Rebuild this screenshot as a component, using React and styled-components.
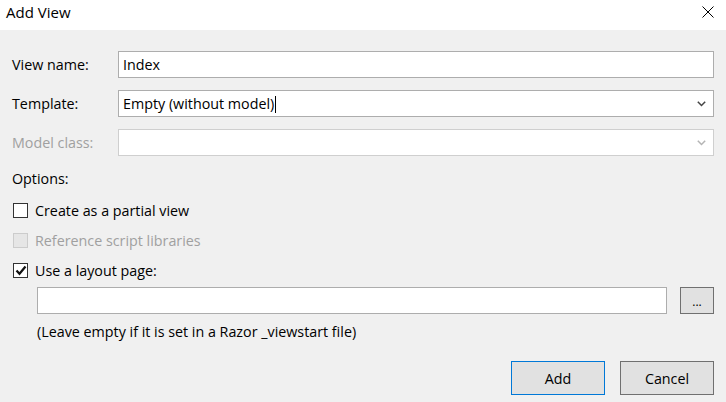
import React from "react";
import styled, { createGlobalStyle } from "styled-components";

const Global = createGlobalStyle`
  html, body { margin: 0; padding: 0; background: #f0f0f0; }
  body { font-family: "Open Sans", "Noto Sans", sans-serif; }
`;

const Dialog = styled.div`
  width: 726px;
  height: 402px;
  background: #f0f0f0;
  display: flex;
  flex-direction: column;
  font-family: "Open Sans", "Noto Sans", sans-serif;
  font-size: 14.3px;
  color: #000;
  overflow: hidden;
`;

const TitleBar = styled.div`
  height: 30px;
  background: #fff;
  display: flex;
  align-items: center;
  justify-content: space-between;
  padding: 0 12px 0 6px;
  box-sizing: border-box;
`;

const Title = styled.div`
  font-size: 15px;
  margin-top: -6px;
`;

const CloseBtn = styled.div`
  width: 12px;
  height: 12px;
  margin-top: -7px;
  display: flex;
`;

const Body = styled.div`
  flex: 1;
  display: flex;
  flex-direction: column;
  padding: 21px 12px 0 12px;
`;

const FieldRow = styled.div`
  display: grid;
  grid-template-columns: 106px 1fr;
  align-items: center;
  margin-bottom: ${(p) => p.$mb || 0}px;
`;

const Label = styled.div`
  color: ${(p) => (p.$disabled ? "#a0a0a0" : "#000")};
  line-height: 20px;
`;

const Input = styled.div`
  height: 27px;
  box-sizing: border-box;
  background: #fff;
  border: 1px solid ${(p) => (p.$disabled ? "#cfcfcf" : "#adadad")};
  display: flex;
  align-items: center;
  padding: 0 7px 0 4px;
  position: relative;
`;

const InputText = styled.span`
  flex: 1;
  line-height: 20px;
  white-space: nowrap;
`;

const Caret = styled.span`
  display: inline-block;
  width: 1px;
  height: 17px;
  background: #000;
  vertical-align: middle;
  margin-left: 1px;
`;

const Chevron = ({ color }) => (
  <svg width="9" height="6" viewBox="0 0 9 6">
    <path d="M0.8 0.8 L4.5 4.5 L8.2 0.8" fill="none" stroke={color} strokeWidth="1.5" />
  </svg>
);

const Section = styled.div`
  line-height: 20px;
  margin-top: ${(p) => p.$mt || 0}px;
`;

const CheckRow = styled.div`
  display: flex;
  align-items: center;
  height: 20px;
  margin-top: ${(p) => p.$mt || 0}px;
  gap: 7px;
  padding-left: 1px;
  color: ${(p) => (p.$disabled ? "#a0a0a0" : "#000")};
`;

const Box = styled.div`
  width: 15px;
  height: 15px;
  box-sizing: border-box;
  border: 1px solid ${(p) => (p.$disabled ? "#cccccc" : "#333")};
  background: ${(p) => (p.$disabled ? "#e6e6e6" : "#fff")};
  display: flex;
  align-items: center;
  justify-content: center;
`;

const Indented = styled.div`
  padding-left: 25px;
  display: flex;
  flex-direction: column;
`;

const PathRow = styled.div`
  display: flex;
  align-items: center;
  margin-top: 7px;
  gap: 13px;
`;

const PathInput = styled(Input)`
  flex: 1;
`;

const SmallButton = styled.div`
  width: 34px;
  height: 27px;
  box-sizing: border-box;
  border: 1px solid #707070;
  background: #e1e1e1;
  display: flex;
  align-items: center;
  justify-content: center;
  font-size: 12px;
  padding-top: 2px;
`;

const Hint = styled.div`
  line-height: 20px;
  margin-top: 8px;
`;

const Footer = styled.div`
  display: flex;
  justify-content: flex-end;
  gap: 15px;
  margin-top: 19px;
`;

const Button = styled.div`
  width: 94px;
  height: 34px;
  box-sizing: border-box;
  border: 1px solid ${(p) => (p.$primary ? "#0078d7" : "#707070")};
  background: #e1e1e1;
  display: flex;
  align-items: center;
  justify-content: center;
`;

export default function App() {
  return (
    <Dialog>
      <Global />
      <TitleBar>
        <Title>Add View</Title>
        <CloseBtn>
          <svg width="12" height="12" viewBox="0 0 12 12">
            <path d="M0.5 0.5 L11.5 11.5 M11.5 0.5 L0.5 11.5" stroke="#000" strokeWidth="1" />
          </svg>
        </CloseBtn>
      </TitleBar>
      <Body>
        <FieldRow $mb={12}>
          <Label>View name:</Label>
          <Input>
            <InputText>Index</InputText>
          </Input>
        </FieldRow>
        <FieldRow $mb={12}>
          <Label>Template:</Label>
          <Input>
            <InputText>
              Empty (without model)
              <Caret />
            </InputText>
            <Chevron color="#444" />
          </Input>
        </FieldRow>
        <FieldRow>
          <Label $disabled>Model class:</Label>
          <Input $disabled>
            <InputText />
            <Chevron color="#b4b4b4" />
          </Input>
        </FieldRow>
        <Section $mt={13}>Options:</Section>
        <CheckRow $mt={11}>
          <Box />
          <span>Create as a partial view</span>
        </CheckRow>
        <CheckRow $mt={10} $disabled>
          <Box $disabled />
          <span>Reference script libraries</span>
        </CheckRow>
        <CheckRow $mt={10}>
          <Box>
            <svg width="12" height="11" viewBox="0 0 12 11">
              <path d="M1.5 5.5 L4.5 8.8 L10.5 1.5" fill="none" stroke="#111" strokeWidth="2.2" />
            </svg>
          </Box>
          <span>Use a layout page:</span>
        </CheckRow>
        <Indented>
          <PathRow>
            <PathInput />
            <SmallButton>...</SmallButton>
          </PathRow>
          <Hint>(Leave empty if it is set in a Razor _viewstart file)</Hint>
        </Indented>
        <Footer>
          <Button $primary>Add</Button>
          <Button>Cancel</Button>
        </Footer>
      </Body>
    </Dialog>
  );
}
